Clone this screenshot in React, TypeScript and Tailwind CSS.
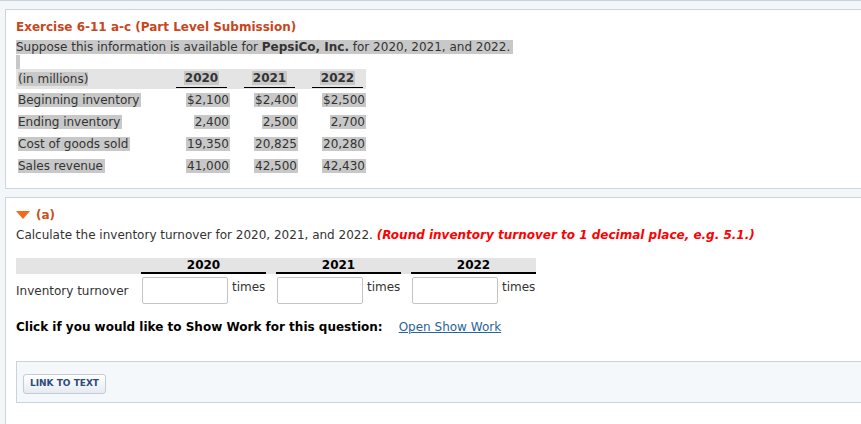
import React from 'react';

const FONT = { fontFamily: '"DejaVu Sans", Verdana, sans-serif' };

const rows = [
  { label: 'Beginning inventory', values: ['$2,100', '$2,400', '$2,500'] },
  { label: 'Ending inventory', values: ['2,400', '2,500', '2,700'] },
  { label: 'Cost of goods sold', values: ['19,350', '20,825', '20,280'] },
  { label: 'Sales revenue', values: ['41,000', '42,500', '42,430'] },
];

const years = ['2020', '2021', '2022'];

function Hl({ children, className = '' }: { children: React.ReactNode; className?: string }) {
  return <span className={`bg-[#c8c8c8] ${className}`}>{children}</span>;
}

function DataTable() {
  return (
    <div className="text-[12px] text-[#333]">
      <div className="flex h-[20px] w-[350px] items-center bg-[#e4e4e4]">
        <div className="w-[146px] pl-[2px]">
          <Hl>(in millions)</Hl>
        </div>
        {years.map((y) => (
          <div key={y} className="flex w-[68px] justify-end pr-[3px]">
            <div className="w-[51px] border-b border-black pb-[1px] text-center font-bold leading-[15px]">
              <Hl className="px-[1px]">{y}</Hl>
            </div>
          </div>
        ))}
      </div>
      {rows.map((r) => (
        <div key={r.label} className="flex h-[22px] items-center">
          <div className="w-[146px] pl-[2px]">
            <Hl className="pr-[2px]">{r.label}</Hl>
          </div>
          {r.values.map((v) => (
            <div key={v} className="w-[68px] text-right">
              <Hl className="px-[1px]">{v}</Hl>
            </div>
          ))}
        </div>
      ))}
    </div>
  );
}

function TurnoverTable() {
  return (
    <div className="text-[12px] text-[#222]">
      <div className="flex h-[16px] w-[520px] items-end bg-[#e4e4e4]">
        <div className="w-[125px]" />
        {years.map((y, i) => (
          <div
            key={y}
            className={`w-[125px] border-b-2 border-black text-center font-bold leading-[14px] text-black ${i > 0 ? 'ml-[10px]' : ''}`}
          >
            {y}
          </div>
        ))}
      </div>
      <div className="mt-[3px] flex items-start">
        <div className="flex h-[27px] w-[125px] items-center text-[#333]">Inventory turnover</div>
        {years.map((y, i) => (
          <div key={y} className={`flex w-[125px] items-start ${i > 0 ? 'ml-[10px]' : ''}`}>
            <input
              type="text"
              className="ml-[1px] h-[27px] w-[86px] rounded-[2px] border border-[#c4c4c4] bg-white"
            />
            <span className="ml-[4px] pt-[2px] leading-[16px] text-[#333]">times</span>
          </div>
        ))}
      </div>
    </div>
  );
}

export default function App() {
  return (
    <div style={FONT} className="min-h-[424px] overflow-hidden border-t border-[#c9d3de] bg-[#f4f7fa] pl-[5px] pt-[8px]">
      <div className="h-[180px] border border-r-0 border-[#ccd5df] bg-white pl-[10px] pt-[9px]">
        <div className="text-[12px] font-bold leading-[16px] text-[#c8461b]">
          Exercise 6-11 a-c (Part Level Submission)
        </div>
        <div className="mt-[5px] text-[12px] leading-[15px] text-[#333]">
          <Hl className="pr-[3px]">
            Suppose this information is available for <b>PepsiCo, Inc.</b> for 2020, 2021, and 2022.
          </Hl>
        </div>
        <div className="h-[14px] w-[4px] bg-[#c8c8c8]" />
        <DataTable />
      </div>

      <div className="mt-[8px] h-[240px] border border-r-0 border-b-0 border-[#ccd5df] bg-white pl-[10px] pt-[8px]">
        <div className="flex h-[17px] items-center gap-[6px]">
          <svg width="14" height="8" viewBox="0 0 14 8" className="mt-[1px]">
            <path d="M0 0 H14 L7 8 Z" fill="#f26b1d" />
          </svg>
          <span className="text-[12px] font-bold text-[#c8521b]">(a)</span>
        </div>
        <div className="mt-[4px] text-[12px] leading-[16px] text-[#333]">
          Calculate the inventory turnover for 2020, 2021, and 2022.{' '}
          <span className="font-bold italic text-[#ff0000]">
            (Round inventory turnover to 1 decimal place, e.g. 5.1.)
          </span>
        </div>
        <div className="mt-[15px]">
          <TurnoverTable />
        </div>
        <div className="mt-[15px] flex h-[16px] items-center text-[12px]">
          <span className="font-bold text-black">Click if you would like to Show Work for this question:</span>
          <a href="#" className="ml-[16px] text-[#2a6496] underline">
            Open Show Work
          </a>
        </div>
        <div className="mt-[26px] h-[42px] border border-r-0 border-[#c9d3de] bg-[#f5f8fb] pl-[6px] pt-[7px]">
          <button className="h-[20px] rounded-[3px] border border-[#c3ccd6] bg-gradient-to-b from-white to-[#e6ebf0] px-[6px] text-[9px] font-bold text-[#2d4a7a]">
            LINK TO TEXT
          </button>
        </div>
      </div>
    </div>
  );
}
